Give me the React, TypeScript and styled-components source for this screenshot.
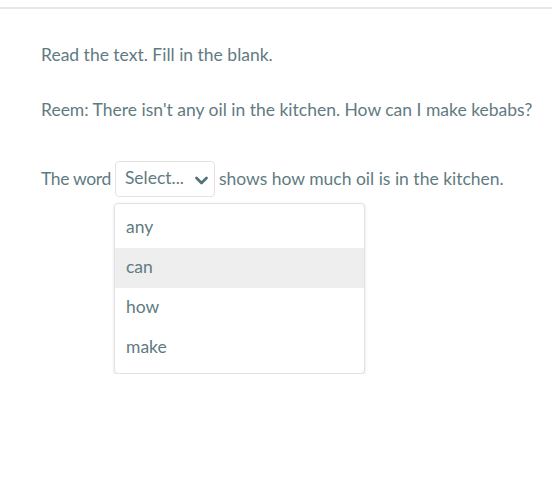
import React from "react";
import styled, { createGlobalStyle } from "styled-components";

const GlobalStyle = createGlobalStyle`
  body {
    margin: 0;
    background: #ffffff;
    font-family: "Lato", "Open Sans", sans-serif;
    color: #5f7b82;
  }
`;

const TopBar = styled.div`
  height: 7px;
  border-bottom: 2px solid #e8e8e8;
`;

const Content = styled.div`
  padding: 34px 8px 0 41px;
`;

const Line = styled.p<{ $gap?: number }>`
  margin: 0 0 ${(p) => p.$gap ?? 0}px;
  font-size: 17.5px;
  line-height: 24px;
  white-space: nowrap;
`;

const Sentence = styled.div`
  display: flex;
  align-items: flex-start;
  gap: 4px;
  font-size: 17.5px;
  line-height: 24px;
  white-space: nowrap;
`;

const Words = styled.span<{ $tight?: boolean }>`
  padding-top: 6px;
  letter-spacing: ${(p) => (p.$tight ? "-0.35px" : "0")};
`;

const SelectBox = styled.div`
  box-sizing: border-box;
  width: 100px;
  height: 36px;
  border: 1px solid #e3e3e3;
  border-radius: 4px;
  display: flex;
  align-items: center;
  justify-content: space-between;
  padding: 0 5px 3px 9px;
`;

const Chevron = styled.svg`
  width: 15px;
  height: 15px;
  margin-top: 5px;
`;

const Menu = styled.div`
  width: 251px;
  box-sizing: border-box;
  margin: 6px 0 0 73px;
  padding: 4px 0 5px;
  background: #fff;
  border: 1px solid #e2e2e2;
  border-radius: 4px;
  box-shadow: 0 1px 3px rgba(0, 0, 0, 0.12);
  font-size: 17.5px;
`;

const Option = styled.div<{ $active?: boolean }>`
  height: 40px;
  line-height: 38px;
  padding: 0 11px;
  background: ${(p) => (p.$active ? "#eeeeee" : "#ffffff")};
`;

const options = ["any", "can", "how", "make"];

export default function App() {
  return (
    <>
      <GlobalStyle />
      <TopBar />
      <Content>
        <Line $gap={31}>Read the text. Fill in the blank.</Line>
        <Line $gap={39}>
          Reem: There isn't any oil in the kitchen. How can I make kebabs?
        </Line>
        <Sentence>
          <Words $tight>The word</Words>
          <SelectBox>
            <span>Select...</span>
            <Chevron viewBox="0 0 15 15">
              <path
                d="M2.5 5 L7.5 10 L12.5 5"
                fill="none"
                stroke="#55737a"
                strokeWidth="2.8"
                strokeLinecap="round"
                strokeLinejoin="round"
              />
            </Chevron>
          </SelectBox>
          <Words>shows how much oil is in the kitchen.</Words>
        </Sentence>
        <Menu>
          {options.map((o) => (
            <Option key={o} $active={o === "can"}>
              {o}
            </Option>
          ))}
        </Menu>
      </Content>
    </>
  );
}
